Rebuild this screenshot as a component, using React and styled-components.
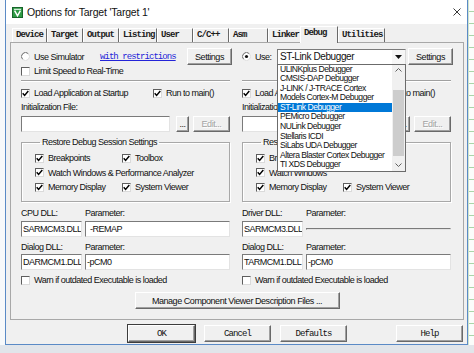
import React from 'react';
import styled, { createGlobalStyle } from 'styled-components';

const SANS = '"Liberation Sans", Arial, sans-serif';
const MONO = '"Liberation Mono", "DejaVu Sans Mono", monospace';

const Global = createGlobalStyle`
  html, body { margin: 0; padding: 0; }
  body { width: 474px; height: 353px; overflow: hidden; background: #fff; font-family: ${SANS}; color: #111; }
  * { box-sizing: border-box; }
`;

const Screen = styled.div`
  width: 474px;
  height: 353px;
  display: flex;
  flex-direction: column;
`;
const Desk = styled.div`
  display: flex;
  height: 345px;
`;
const SideLeft = styled.div`
  width: 5px;
  background: #f7f9fb;
`;
const SideRight = styled.div`
  flex: 1;
  border-left: 1px solid #cfe3cf;
  background: repeating-linear-gradient(to bottom, #fbfdfb 0 11px, #a9d6a9 11px 12px);
`;
const Taskbar = styled.div`
  height: 8px;
  background: #e1e5ea;
`;

const Window = styled.div`
  width: 463px;
  display: flex;
  flex-direction: column;
  background: #f0f0f0;
  border: 1px solid #5a8ac6;
  border-top: none;
`;

const TitleBar = styled.div`
  height: 24px;
  background: #fff;
  display: flex;
  align-items: center;
  padding: 0 6px;
`;
const Title = styled.span`
  margin-left: 4px;
  font-size: 10.5px;
  letter-spacing: -0.2px;
  color: #111;
  white-space: nowrap;
`;
const Close = styled.span`
  margin-left: auto;
  display: flex;
`;

const TabStrip = styled.div`
  height: 18px;
  display: flex;
  align-items: flex-end;
  padding-left: 6px;
  position: relative;
  z-index: 2;
`;
const Tab = styled.div`
  width: ${p => p.$w}px;
  height: ${p => (p.$active ? 17 : 14)}px;
  margin-left: ${p => (p.$active ? -2 : 0)}px;
  margin-bottom: ${p => (p.$active ? -1 : 0)}px;
  padding-left: 3px;
  font-family: ${MONO};
  font-weight: bold;
  font-size: 9px;
  letter-spacing: -0.9px;
  line-height: 13px;
  color: #1a1a1a;
  background: #f0f0f0;
  border-top: 1px solid #fff;
  border-left: 1px solid #fff;
  border-right: 1px solid #696969;
  white-space: nowrap;
  position: relative;
  z-index: ${p => (p.$active ? 2 : 1)};
`;

const Panel = styled.div`
  margin: 0 3px 0 4px;
  border: 1px solid #a8a8a8;
  padding: 5px 10px 10px 10px;
  display: flex;
  flex-direction: column;
`;
const Columns = styled.div`
  display: flex;
  gap: 12px;
`;
const Column = styled.div`
  width: 209px;
  display: flex;
  flex-direction: column;
  position: relative;
`;
const TopRow = styled.div`
  height: 17px;
  margin-right: -2px;
  display: flex;
  align-items: center;
`;
const Row = styled.div`
  height: ${p => p.$h || 12}px;
  margin-top: ${p => p.$mt || 0}px;
  display: flex;
  align-items: center;
`;
const Separator = styled.div`
  margin-top: 3px;
  height: 2px;
  border-top: 1px solid #a0a0a0;
  border-bottom: 1px solid #fff;
`;
const Text = styled.span`
  font-size: 9px;
  letter-spacing: -0.5px;
  line-height: 12px;
  white-space: nowrap;
  color: #111;
`;
const Option = styled.div`
  display: flex;
  align-items: center;
  gap: 4px;
  flex: none;
  width: ${p => (p.$w ? `${p.$w}px` : 'auto')};
  margin-left: ${p => p.$ml || 0}px;
`;
const CheckBox = styled.span`
  width: 9px;
  height: 9px;
  flex: none;
  background: #fff;
  border: 1px solid;
  border-color: #5e5e5e #dadada #dadada #5e5e5e;
  display: flex;
  align-items: center;
  justify-content: center;
`;
const Link = styled.span`
  font-family: ${MONO};
  font-size: 9px;
  letter-spacing: -0.95px;
  color: #2424d8;
  text-decoration: underline;
  white-space: nowrap;
`;
const Btn = styled.div`
  width: ${p => p.$w}px;
  height: ${p => p.$h || 17}px;
  flex: none;
  margin-left: ${p => (p.$push ? 'auto' : '0')};
  display: flex;
  align-items: center;
  justify-content: center;
  background: #f0f0f0;
  border: 1px solid;
  border-color: #fff #696969 #696969 #fff;
  box-shadow: inset -1px -1px 0 #a0a0a0${p => (p.$default ? ', 0 0 0 1px #3c3c3c' : '')};
  font-family: ${p => (p.$mono ? MONO : SANS)};
  font-size: 9px;
  letter-spacing: ${p => (p.$mono ? '-0.9px' : '-0.45px')};
  color: ${p => (p.$disabled ? '#a3a3a3' : '#111')};
  text-shadow: ${p => (p.$disabled ? '1px 1px 0 #fff' : 'none')};
  white-space: nowrap;
`;
const InputRow = styled.div`
  margin-top: 3px;
  height: 16px;
  display: flex;
  align-items: stretch;
`;
const Field = styled.div`
  width: ${p => (p.$w ? `${p.$w}px` : 'auto')};
  flex: ${p => (p.$w ? 'none' : '1')};
  margin-right: ${p => p.$mr || 0}px;
  background: #fff;
  border: 1px solid;
  border-color: #7a7a7a #e3e3e3 #e3e3e3 #7a7a7a;
  padding-left: ${p => p.$pad ?? 1}px;
  font-size: 9px;
  letter-spacing: -0.5px;
  line-height: 14px;
  white-space: nowrap;
  overflow: hidden;
  color: #111;
`;
const Group = styled.fieldset`
  margin: 4px 0 0 0;
  padding: 3px 0 6px 13px;
  border: 1px solid #a8a8a8;
  box-shadow: inset 1px 1px 0 #fff, 1px 1px 0 #fff;
  min-inline-size: 0;
  display: grid;
  grid-template-columns: 87px auto;
  grid-auto-rows: 14.5px;
  align-items: center;
`;
const Legend = styled.legend`
  margin-left: 5px;
  padding: 0 2px;
  font-size: 9px;
  letter-spacing: -0.5px;
  line-height: 12px;
  color: #111;
`;
const Span2 = styled.div`
  grid-column: 1 / span 2;
`;
const DllGrid = styled.div`
  margin-top: ${p => p.$mt || 0}px;
  height: ${p => p.$h}px;
  display: grid;
  grid-template-columns: 61px 1fr;
  column-gap: 3px;
  align-items: center;
`;

const Select = styled.div`
  width: 129px;
  height: 16px;
  position: relative;
  display: flex;
  background: #fff;
  border: 1px solid;
  border-color: #7a7a7a #d8d8d8 #d8d8d8 #7a7a7a;
`;
const SelectText = styled.span`
  flex: 1;
  padding-left: 2px;
  font-size: 10px;
  letter-spacing: -0.4px;
  line-height: 14px;
  white-space: nowrap;
  color: #111;
`;
const SelectArrow = styled.span`
  width: 13px;
  display: flex;
  align-items: center;
  justify-content: center;
  background: #f6f6f6;
`;
const DropList = styled.div`
  position: absolute;
  top: 100%;
  left: -1px;
  width: 129px;
  height: 108px;
  background: #fff;
  border: 1px solid #6b6b6b;
  display: flex;
  z-index: 10;
`;
const Items = styled.div`
  flex: 1;
  display: flex;
  flex-direction: column;
`;
const Item = styled.div`
  height: 9.6px;
  line-height: 9.6px;
  padding-left: 2px;
  font-size: 8.6px;
  letter-spacing: -0.5px;
  white-space: nowrap;
  overflow: hidden;
  background: ${p => (p.$sel ? '#0078d7' : 'transparent')};
  color: ${p => (p.$sel ? '#fff' : '#111')};
`;
const ScrollBar = styled.div`
  width: 13px;
  display: flex;
  flex-direction: column;
  background: #f0f0f0;
`;
const ScrollArrow = styled.div`
  height: 11px;
  display: flex;
  align-items: center;
  justify-content: center;
`;
const Track = styled.div`
  flex: 1;
  display: flex;
  flex-direction: column;
  align-items: center;
`;
const Thumb = styled.div`
  margin-top: 14.5px;
  width: 11px;
  height: 66px;
  background: #cdcdcd;
`;

const ManageRow = styled.div`
  margin-top: 6px;
  display: flex;
  justify-content: center;
`;
const ButtonBar = styled.div`
  margin-top: 5px;
  margin-bottom: 2px;
  height: 17px;
  display: flex;
  gap: 9px;
  padding: 0 4px 0 122px;
`;

const Check = ({ on }) => (
  <CheckBox>
    {on && (
      <svg width="7" height="7" viewBox="0 0 7 7">
        <path d="M0.7 3.3 L2.6 5.4 L6.3 1.1" fill="none" stroke="#000" strokeWidth="1.5" />
      </svg>
    )}
  </CheckBox>
);

const Radio = ({ on }) => (
  <svg width="9" height="9" viewBox="0 0 9 9" style={{ flex: 'none' }}>
    <circle cx="4.5" cy="4.5" r="4" fill="#fff" />
    <path d="M1.67 7.33 A4 4 0 0 1 7.33 1.67" stroke="#6a6a6a" fill="none" />
    <path d="M7.33 1.67 A4 4 0 0 1 1.67 7.33" stroke="#dcdcdc" fill="none" />
    {on && <circle cx="4.5" cy="4.5" r="1.6" fill="#111" />}
  </svg>
);

const CheckOption = ({ on, label, w, ml }) => (
  <Option $w={w} $ml={ml}>
    <Check on={on} />
    <Text>{label}</Text>
  </Option>
);

const Chevron = ({ down }) => (
  <svg width="7" height="4" viewBox="0 0 7 4">
    <path d={down ? 'M0.5 0.5 L3.5 3.5 L6.5 0.5' : 'M0.5 3.5 L3.5 0.5 L6.5 3.5'} fill="none" stroke="#606060" />
  </svg>
);

const tabs = [
  { label: 'Device', w: 35 },
  { label: 'Target', w: 36 },
  { label: 'Output', w: 36 },
  { label: 'Listing', w: 38 },
  { label: 'User', w: 36 },
  { label: 'C/C++', w: 36 },
  { label: 'Asm', w: 39 },
  { label: 'Linker', w: 34 },
  { label: 'Debug', w: 38, active: true },
  { label: 'Utilities', w: 47 },
];

const debuggers = [
  'ULINKplus Debugger',
  'CMSIS-DAP Debugger',
  'J-LINK / J-TRACE Cortex',
  'Models Cortex-M Debugger',
  'ST-Link Debugger',
  'PEMicro Debugger',
  'NULink Debugger',
  'Stellaris ICDI',
  'SiLabs UDA Debugger',
  'Altera Blaster Cortex Debugger',
  'TI XDS Debugger',
];

function DebugColumn({ top, limit, watch, dllLabel, dll1, param1, dll2, param2 }) {
  return (
    <Column>
      <TopRow>{top}</TopRow>
      <Row>{limit && <CheckOption label="Limit Speed to Real-Time" />}</Row>
      <Separator />
      <Row $mt={5}>
        <CheckOption on w={132} label="Load Application at Startup" />
        <CheckOption on label="Run to main()" />
      </Row>
      <Row $mt={2}>
        <Text>Initialization File:</Text>
      </Row>
      <InputRow>
        <Field $w={149} $mr={6} />
        <Btn $w={13} $h={16}>...</Btn>
        <Btn $w={37} $h={16} $push $disabled>
          Edit...
        </Btn>
      </InputRow>
      <Group>
        <Legend>Restore Debug Session Settings</Legend>
        <CheckOption on label="Breakpoints" />
        <CheckOption on label="Toolbox" />
        <Span2>
          <CheckOption on label={watch} />
        </Span2>
        <CheckOption on label="Memory Display" />
        <CheckOption on label="System Viewer" />
      </Group>
      <DllGrid $mt={5} $h={12}>
        <Text>{dllLabel}</Text>
        <Text>Parameter:</Text>
      </DllGrid>
      <DllGrid $mt={2} $h={16}>
        <Field>{dll1}</Field>
        <Field $pad={4}>{param1}</Field>
      </DllGrid>
      <DllGrid $mt={4.5} $h={12}>
        <Text>Dialog DLL:</Text>
        <Text>Parameter:</Text>
      </DllGrid>
      <DllGrid $mt={1} $h={16}>
        <Field>{dll2}</Field>
        <Field $pad={1}>{param2}</Field>
      </DllGrid>
      <Row $mt={4}>
        <CheckOption label="Warn if outdated Executable is loaded" />
      </Row>
    </Column>
  );
}

export default function App() {
  const leftTop = (
    <>
      <Option $w={79}>
        <Radio />
        <Text>Use Simulator</Text>
      </Option>
      <Link>with restrictions</Link>
      <Btn $w={45} $push>
        Settings
      </Btn>
    </>
  );
  const rightTop = (
    <>
      <Option $w={35}>
        <Radio on />
        <Text>Use:</Text>
      </Option>
      <Select>
        <SelectText>ST-Link Debugger</SelectText>
        <SelectArrow>
          <svg width="7" height="4" viewBox="0 0 7 4">
            <path d="M0 0 H7 L3.5 4 Z" fill="#111" />
          </svg>
        </SelectArrow>
        <DropList>
          <Items>
            {debuggers.map(d => (
              <Item key={d} $sel={d === 'ST-Link Debugger'}>
                {d}
              </Item>
            ))}
          </Items>
          <ScrollBar>
            <ScrollArrow>
              <Chevron />
            </ScrollArrow>
            <Track>
              <Thumb />
            </Track>
            <ScrollArrow>
              <Chevron down />
            </ScrollArrow>
          </ScrollBar>
        </DropList>
      </Select>
      <Btn $w={45} $push>
        Settings
      </Btn>
    </>
  );

  return (
    <>
      <Global />
      <Screen>
        <Desk>
          <SideLeft />
          <Window>
            <TitleBar>
              <svg width="11" height="11" viewBox="0 0 11 11">
                <rect x="0.5" y="0.5" width="10" height="10" fill="#2f9a45" stroke="#17652a" />
                <path d="M2 2.3 H9" stroke="#fff" strokeWidth="1" />
                <path d="M2.6 3.6 L5.5 8.8 L8.4 3.6" fill="none" stroke="#fff" strokeWidth="1.5" />
              </svg>
              <Title>Options for Target 'Target 1'</Title>
              <Close>
                <svg width="8" height="8" viewBox="0 0 8 8">
                  <path d="M0.5 0.5 L7.5 7.5 M7.5 0.5 L0.5 7.5" stroke="#222" strokeWidth="0.9" />
                </svg>
              </Close>
            </TitleBar>
            <TabStrip>
              {tabs.map(t => (
                <Tab key={t.label} $w={t.w} $active={t.active}>
                  {t.label}
                </Tab>
              ))}
            </TabStrip>
            <Panel>
              <Columns>
                <DebugColumn
                  top={leftTop}
                  limit
                  watch="Watch Windows & Performance Analyzer"
                  dllLabel="CPU DLL:"
                  dll1="SARMCM3.DLL"
                  param1="-REMAP"
                  dll2="DARMCM1.DLL"
                  param2="-pCM0"
                />
                <DebugColumn
                  top={rightTop}
                  watch="Watch Windows"
                  dllLabel="Driver DLL:"
                  dll1="SARMCM3.DLL"
                  param1=""
                  dll2="TARMCM1.DLL"
                  param2="-pCM0"
                />
              </Columns>
              <ManageRow>
                <Btn $w={205}>Manage Component Viewer Description Files ...</Btn>
              </ManageRow>
            </Panel>
            <ButtonBar>
              <Btn $w={67} $mono $default>OK</Btn>
              <Btn $w={67} $mono>Cancel</Btn>
              <Btn $w={67} $mono>Defaults</Btn>
              <Btn $w={67} $mono $push>Help</Btn>
            </ButtonBar>
          </Window>
          <SideRight />
        </Desk>
        <Taskbar />
      </Screen>
    </>
  );
}
